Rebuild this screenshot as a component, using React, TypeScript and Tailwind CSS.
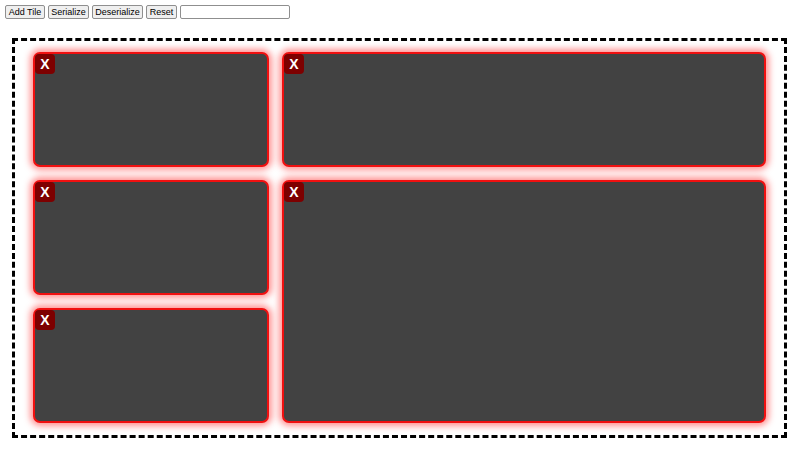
import React from 'react'

type Tile = { id: number; area: string }

const tiles: Tile[] = [
  { id: 1, area: '[grid-area:1/1/2/2]' },
  { id: 2, area: '[grid-area:1/2/2/3]' },
  { id: 3, area: '[grid-area:2/1/3/2]' },
  { id: 4, area: '[grid-area:2/2/4/3]' },
  { id: 5, area: '[grid-area:3/1/4/2]' },
]

function TileBox({ tile }: { tile: Tile }) {
  return (
    <div
      className={`${tile.area} relative rounded-[7px] border-2 border-[#f01010] bg-[#424242] shadow-[0_0_6px_3px_rgba(255,40,40,0.5)]`}
    >
      <button className="absolute left-0 top-0 flex h-[20px] w-[20px] items-center justify-center rounded-[4px] bg-[#7d0000] text-[14px] font-bold leading-none text-white">
        X
      </button>
    </div>
  )
}

export default function App() {
  const btn =
    'h-[14px] whitespace-nowrap rounded-[2px] border border-[#8f8f8f] bg-[#efefef] px-0 text-[9px] leading-none text-black'

  return (
    <div className="h-[450px] w-[800px] bg-white font-['Liberation_Sans',Arial,sans-serif]">
      <div className="flex items-center gap-[3px] pl-[5px] pt-[5px]">
        <button className={`${btn} w-[40px]`}>Add Tile</button>
        <button className={`${btn} w-[41px]`}>Serialize</button>
        <button className={`${btn} w-[51px]`}>Deserialize</button>
        <button className={`${btn} w-[31px]`}>Reset</button>
        <input className="h-[14px] w-[110px] rounded-[2px] border border-[#8f8f8f] bg-white" />
      </div>
      <div className="ml-[12px] mt-[19px] w-[775px] border-[3px] border-dashed border-black px-[18px] pb-[12px] pt-[11px]">
        <div className="grid grid-cols-[236px_484px] grid-rows-[115px_115px_115px] gap-[13px]">
          {tiles.map((t) => (
            <TileBox key={t.id} tile={t} />
          ))}
        </div>
      </div>
    </div>
  )
}
